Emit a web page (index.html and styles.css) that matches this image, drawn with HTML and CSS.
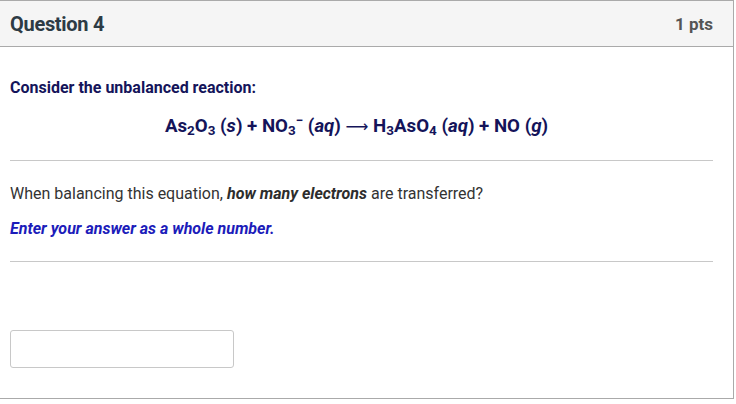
FILE: index.html
```html
<!DOCTYPE html>
<html>
<head>
<meta charset="utf-8">
<link rel="stylesheet" href="styles.css">
</head>
<body>
<div class="question">
  <div class="header">
    <span class="title">Question 4</span>
    <span class="pts">1 pts</span>
  </div>
  <div class="content">
    <p class="intro">Consider the unbalanced reaction:</p>
    <p class="equation">As<sub>2</sub>O<sub>3</sub> (<i>s</i>) + NO<sub>3</sub><sup>−</sup> (<i>aq</i>) <span class="arrow">⟶</span> H<sub>3</sub>AsO<sub>4</sub> (<i>aq</i>) + NO (<i>g</i>)</p>
    <hr class="rule">
    <p class="ask">When balancing this equation, <b><i>how many electrons</i></b> are transferred?</p>
    <p class="note">Enter your answer as a whole number.</p>
    <hr class="rule">
    <div class="answer"><input class="field" type="text"></div>
  </div>
</div>
</body>
</html>
```
FILE: styles.css
```css
html, body { margin: 0; padding: 0; background: #fff; }
body { font-family: Roboto, "Noto Sans", sans-serif; }
.question {
  width: 733px;
  height: 397px;
  border-top: 1px solid #aaa;
  border-right: 1px solid #aaa;
  border-bottom: 1px solid #aaa;
  box-sizing: content-box;
}
.header {
  height: 45px;
  background: #f5f5f5;
  border-bottom: 1px solid #aaa;
  display: flex;
  align-items: center;
  justify-content: space-between;
  padding: 0 20px 0 10px;
}
.title {
  font-size: 20px;
  font-weight: 700;
  color: #2d3b45;
  letter-spacing: -0.3px;
}
.pts {
  font-size: 17px;
  font-weight: 700;
  color: #555;
}
.content { padding: 0 20px 0 10px; }
.intro {
  margin: 32px 0 0;
  font-size: 16px;
  font-weight: 700;
  color: #14145a;
  line-height: 18px;
}
.equation {
  margin: 18px 0 0;
  padding-right: 10px;
  text-align: center;
  font-size: 18.7px;
  font-weight: 700;
  color: #14145a;
  line-height: 22px;
}
.equation sub { font-size: 0.72em; vertical-align: -0.2em; line-height: 0; }
.equation sup { font-size: 0.72em; vertical-align: 0.5em; line-height: 0; }
.arrow {
  font-family: "DejaVu Sans", sans-serif;
  font-weight: 400;
  font-size: 16px;
}
.rule {
  margin: 0;
  border: 0;
  border-top: 1px solid #c8c8c8;
}
.equation + .rule { margin-top: 22px; }
.ask {
  margin: 23px 0 0;
  font-size: 16px;
  color: #333;
  line-height: 19px;
}
.ask b { color: #2d2d2d; }
.note {
  margin: 17px 0 0;
  font-size: 16px;
  font-weight: 700;
  font-style: italic;
  color: #1c1cba;
  line-height: 18px;
}
.note + .rule { margin-top: 23px; }
.answer { padding-top: 68px; }
.field {
  display: block;
  width: 224px;
  height: 38px;
  box-sizing: border-box;
  border: 1px solid #c8c8c8;
  border-radius: 3px;
  background: #fff;
  margin: 0;
}
```
